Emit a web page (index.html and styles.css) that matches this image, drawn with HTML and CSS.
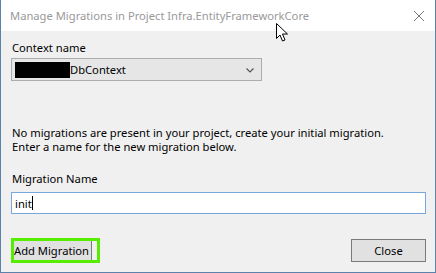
FILE: index.html
```html
<!DOCTYPE html>
<html>
<head>
<meta charset="utf-8">
<link rel="stylesheet" href="styles.css">
</head>
<body>
<div class="window">
  <div class="titlebar">
    <span class="title">Manage Migrations in Project Infra.EntityFrameworkCore</span>
    <svg class="close-x" width="12" height="12" viewBox="0 0 12 12"><path d="M1 1 L11 11 M11 1 L1 11" stroke="#7a7a7a" stroke-width="1" fill="none"/></svg>
  </div>
  <div class="content">
    <div class="label">Context name</div>
    <div class="combo">
      <span class="redact"></span><span class="combo-text">DbContext</span>
      <svg class="chev" width="8" height="5" viewBox="0 0 8 5"><path d="M0.5 0.5 L4 4 L7.5 0.5" stroke="#555" stroke-width="1.2" fill="none"/></svg>
    </div>
    <div class="message">
      <div class="line">No migrations are present in your project, create your initial migration.</div>
      <div class="line">Enter a name for the new migration below.</div>
    </div>
    <div class="label label-name">Migration Name</div>
    <div class="textbox"><span>init</span><span class="caret"></span></div>
    <div class="buttons">
      <div class="focus-ring"><div class="btn btn-add">Add Migration</div></div>
      <div class="btn btn-close">Close</div>
    </div>
  </div>
  <svg class="cursor" width="13" height="20" viewBox="0 0 13 20"><path d="M0.5 0.5 L0.5 15.5 L4 12 L6.5 18 L9 17 L6.5 11 L11.5 11 Z" fill="#fff" stroke="#000" stroke-width="1" stroke-linejoin="miter"/></svg>
</div>
</body>
</html>
```
FILE: styles.css
```css
html, body {
  margin: 0;
  padding: 0;
}
body {
  width: 436px;
  height: 273px;
  overflow: hidden;
  font-family: "Noto Sans", "Segoe UI", sans-serif;
  font-size: 11.2px;
  color: #000;
}
.window {
  position: relative;
  box-sizing: border-box;
  width: 436px;
  height: 273px;
  border: 1px solid #5b82ab;
  border-top: none;
  background: #f0f0f0;
  display: flex;
  flex-direction: column;
}
.titlebar {
  height: 31px;
  flex: none;
  background: #fff;
  display: flex;
  align-items: center;
  justify-content: space-between;
  padding: 0 10px 0 9px;
}
.title {
  color: #999;
  white-space: nowrap;
}
.close-x {
  display: block;
}
.content {
  padding: 9px 10px 0 10px;
  display: flex;
  flex-direction: column;
}
.label {
  line-height: 16px;
  height: 16px;
  margin-left: 1px;
  white-space: nowrap;
}
.combo {
  margin-top: 2px;
  width: 251px;
  height: 23px;
  box-sizing: border-box;
  border: 1px solid #acacac;
  background: #e6e6e6;
  display: flex;
  align-items: center;
  padding-left: 3px;
  position: relative;
}
.redact {
  display: inline-block;
  width: 55px;
  height: 16px;
  background: #000;
}
.combo-text {
  line-height: 16px;
  white-space: nowrap;
}
.chev {
  position: absolute;
  right: 7px;
  top: 9px;
}
.message {
  margin-top: 45px;
  margin-left: 1px;
}
.line {
  height: 14px;
  line-height: 14px;
  white-space: nowrap;
}
.label-name {
  margin-top: 17px;
}
.textbox {
  margin-top: 5px;
  width: 415px;
  height: 22px;
  box-sizing: border-box;
  border: 1px solid #7aa7dc;
  background: #fff;
  display: flex;
  align-items: center;
  padding-left: 3px;
  white-space: nowrap;
}
.caret {
  display: inline-block;
  width: 1px;
  height: 14px;
  background: #000;
}
.buttons {
  margin-top: 24px;
  display: flex;
  justify-content: space-between;
  align-items: flex-start;
  width: 415px;
}
.focus-ring {
  border: 3px solid #55ee00;
  height: 19px;
  width: 83px;
}
.btn {
  box-sizing: border-box;
  background: #e1e1e1;
  display: flex;
  align-items: center;
  justify-content: center;
  white-space: nowrap;
}
.btn-add {
  height: 19px;
  width: 78px;
  border-right: 1px solid #7a7a7a;
  justify-content: flex-start;
  padding-left: 0;
}
.btn-close {
  margin-top: 1px;
  width: 75px;
  height: 23px;
  border: 1px solid #7a7a7a;
}
.cursor {
  position: absolute;
  left: 275px;
  top: 23px;
}
```
